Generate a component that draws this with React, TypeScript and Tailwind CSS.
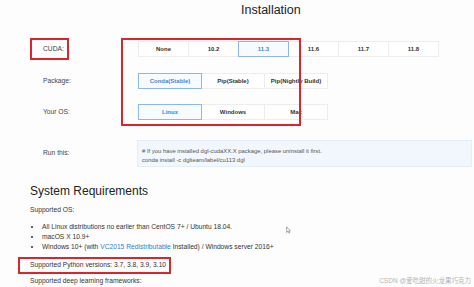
import React from "react";

type Option = { label: string; active?: boolean };

const cudaOptions: Option[] = [
	{ label: "None" },
	{ label: "10.2" },
	{ label: "11.3", active: true },
	{ label: "11.6" },
	{ label: "11.7" },
	{ label: "11.8" },
];

const packageOptions: Option[] = [
	{ label: "Conda(Stable)", active: true },
	{ label: "Pip(Stable)" },
	{ label: "Pip(Nightly Build)" },
];

const osOptions: Option[] = [
	{ label: "Linux", active: true },
	{ label: "Windows" },
	{ label: "Mac" },
];

function OptionRow({
	label,
	options,
	width,
}: {
	label: string;
	options: Option[];
	width: string;
}) {
	return (
		<div className="flex items-center h-[16px] pl-[43px]">
			<div className="w-[95px] text-[6.7px] text-[#444]">{label}</div>
			<div className="flex">
				{options.map((opt) => (
					<div
						key={opt.label}
						className={`${width} h-[16px] -ml-px first:ml-0 flex items-center justify-center text-[6px] font-bold border ${
							opt.active
								? "relative z-10 border-[#8cb8e6] text-[#3d86d4] bg-[#f7fbff]"
								: "border-[#ededed] text-[#333] bg-white"
						}`}
					>
						{opt.label}
					</div>
				))}
			</div>
		</div>
	);
}

function Cursor() {
	return (
		<svg
			viewBox="0 0 8 12"
			className="absolute left-[286px] top-[226px] w-[5px] h-[8px]"
			aria-hidden
		>
			<path d="M1 1 L1 10 L3.2 8 L4.8 11 L6 10.4 L4.5 7.5 L7 7.5 Z" fill="white" stroke="#555" strokeWidth="0.8" />
		</svg>
	);
}

export default function App() {
	return (
		<div
			className="relative w-[474px] h-[287px] overflow-hidden bg-[#fdfdfd] text-[#333]"
			style={{ fontFamily: '"Liberation Sans", "Noto Sans CJK SC", sans-serif' }}
		>
			<div className="flex flex-col">
				<h1 className="pl-[241px] h-[20px] leading-[20px] text-[12.5px] text-[#222]">
					Installation
				</h1>

				<div className="mt-[21px]">
					<OptionRow label="CUDA:" options={cudaOptions} width="w-[51px]" />
				</div>
				<div className="mt-[16px]">
					<OptionRow label="Package:" options={packageOptions} width="w-[64px]" />
				</div>
				<div className="mt-[15px]">
					<OptionRow label="Your OS:" options={osOptions} width="w-[64px]" />
				</div>

				<div className="mt-[20px] flex items-center pl-[43px]">
					<div className="w-[94px] text-[6.7px] text-[#444]">Run this:</div>
					<div className="w-[335px] h-[27px] pt-[6px] pl-[4px] bg-[#f1f7fc] border border-[#e3eef7] text-[5.9px] leading-[9px] text-[#555]">
						<div># If you have installed dgl-cudaXX.X package, please uninstall it first.</div>
						<div>conda install -c dglteam/label/cu113 dgl</div>
					</div>
				</div>

				<h2 className="mt-[16px] pl-[30px] h-[16px] leading-[16px] text-[12px] text-[#222]">
					System Requirements
				</h2>

				<div className="mt-[6px] pl-[30px] text-[6.7px] leading-[10px]">
					Supported OS:
				</div>
				<ul className="mt-[7px] pl-[42px] text-[6.7px] leading-[10px] list-disc">
					<li>All Linux distributions no earlier than CentOS 7+ / Ubuntu 18.04.</li>
					<li>macOS X 10.9+</li>
					<li>
						Windows 10+ (with{" "}
						<span className="text-[#2f7fd0]">VC2015 Redistributable</span>{" "}
						Installed) / Windows server 2016+
					</li>
				</ul>

				<div className="mt-[8px] pl-[30px] text-[6.7px] leading-[10px]">
					Supported Python versions: 3.7, 3.8, 3.9, 3.10
				</div>
				<div className="mt-[6px] pl-[30px] pr-[3px] flex justify-between items-center text-[6.7px] leading-[10px]">
					<span>Supported deep learning frameworks:</span>
					<span className="text-[#b5b5b5] text-[6.5px]">CSDN @爱吃甜的火龙果巧克力</span>
				</div>
			</div>

			{/* annotation boxes */}
			<div className="absolute left-[30px] top-[38px] w-[39px] h-[22px] border-2 border-[#d8262f]" />
			<div className="absolute left-[121px] top-[38px] w-[180px] h-[88px] border-2 border-[#d8262f]" />
			<div className="absolute left-[18px] top-[257px] w-[153px] h-[17px] border-2 border-[#d8262f]" />
			<Cursor />
		</div>
	);
}
